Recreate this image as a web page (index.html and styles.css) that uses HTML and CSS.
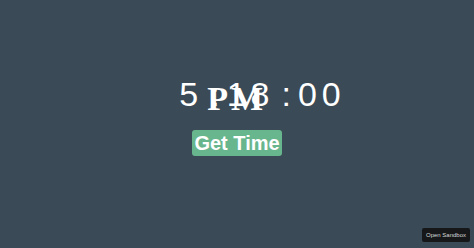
FILE: index.html
```html
<!DOCTYPE html>
<html>
<head>
<meta charset="utf-8">
<link rel="stylesheet" href="styles.css">
</head>
<body>
<div class="app">
  <div class="clock">
    <span class="num">5</span>
    <span class="sep">:</span>
    <span class="num">18</span>
    <span class="sep">:</span>
    <span class="num last">00</span>
    <span class="ampm">PM</span>
  </div>
  <button class="get">Get Time</button>
</div>
<a class="sandbox">Open Sandbox</a>
</body>
</html>
```

FILE: styles.css
```css
html, body {
  margin: 0;
  height: 100%;
}
body {
  background: #3a4a56;
  font-family: "Liberation Sans", Arial, sans-serif;
}
.app {
  display: flex;
  flex-direction: column;
  align-items: center;
  padding-top: 72px;
}
.clock {
  position: relative;
  display: flex;
  align-items: baseline;
  gap: 7px;
  color: #fff;
  font-size: 34px;
  line-height: 44px;
  margin-left: 46px;
}
.num {
  letter-spacing: 5px;
}
.num.last {
  letter-spacing: 5px;
  margin-right: -5px;
}
.ampm {
  position: absolute;
  left: 28px;
  top: 8px;
  font-family: "Liberation Serif", "Times New Roman", serif;
  font-weight: bold;
  font-size: 34px;
  line-height: 38px;
  letter-spacing: 3px;
}
.get {
  margin-top: 14px;
  background: #68b68e;
  color: #fff;
  border: none;
  border-radius: 3px;
  font-family: "Liberation Sans", Arial, sans-serif;
  font-weight: bold;
  font-size: 20px;
  line-height: 26px;
  padding: 0 2px;
}
.sandbox {
  position: fixed;
  right: 4px;
  bottom: 6px;
  background: #151719;
  color: #d8d8d8;
  font-family: "Liberation Sans", Arial, sans-serif;
  font-size: 6px;
  line-height: 14px;
  padding: 0 4px;
  border-radius: 2px;
}
```
